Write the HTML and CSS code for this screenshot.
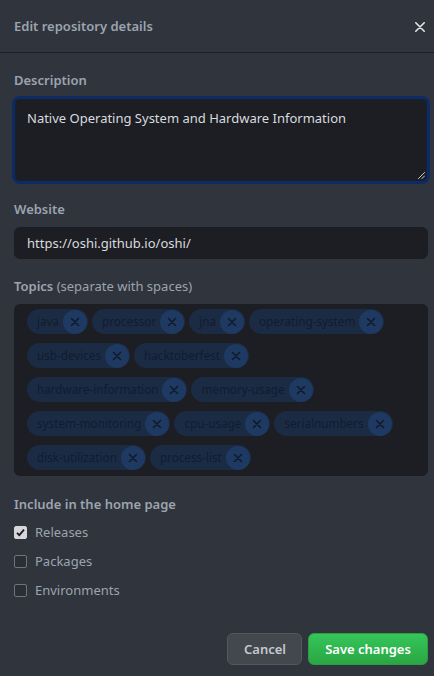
FILE: index.html
```html
<!DOCTYPE html>
<html lang="en">
<head>
<meta charset="utf-8">
<title>Edit repository details</title>
<link rel="stylesheet" href="styles.css">
</head>
<body>
<div class="dialog">
  <header class="dialog-header">
    <h1 class="dialog-title">Edit repository details</h1>
    <button class="close-btn" aria-label="Close">
      <svg width="10" height="10" viewBox="0 0 10 10"><path d="M0.8 0.8L9.2 9.2M9.2 0.8L0.8 9.2" stroke="#e3e5e8" stroke-width="1.6" stroke-linecap="round"/></svg>
    </button>
  </header>
  <form class="dialog-body">
    <div class="field">
      <label class="field-label">Description</label>
      <div class="textarea focused">
        <span class="value">Native Operating System and Hardware Information</span>
        <svg class="grip" width="8" height="8" viewBox="0 0 8 8"><path d="M7.5 1.5L1.5 7.5M7.5 5L5 7.5" stroke="#c9ccd1" stroke-width="1" stroke-linecap="square"/></svg>
      </div>
    </div>
    <div class="field">
      <label class="field-label">Website</label>
      <div class="input"><span class="value">https://oshi.github.io/oshi/</span></div>
    </div>
    <div class="field">
      <label class="field-label">Topics <span class="hint">(separate with spaces)</span></label>
      <div class="topics">
        <div class="tag-row">
          <span class="tag">java<span class="tag-x"><svg viewBox="0 0 10 10"><path d="M1.5 1.5L8.5 8.5M8.5 1.5L1.5 8.5"/></svg></span></span>
          <span class="tag">processor<span class="tag-x"><svg viewBox="0 0 10 10"><path d="M1.5 1.5L8.5 8.5M8.5 1.5L1.5 8.5"/></svg></span></span>
          <span class="tag">jna<span class="tag-x"><svg viewBox="0 0 10 10"><path d="M1.5 1.5L8.5 8.5M8.5 1.5L1.5 8.5"/></svg></span></span>
          <span class="tag">operating-system<span class="tag-x"><svg viewBox="0 0 10 10"><path d="M1.5 1.5L8.5 8.5M8.5 1.5L1.5 8.5"/></svg></span></span>
        </div>
        <div class="tag-row">
          <span class="tag">usb-devices<span class="tag-x"><svg viewBox="0 0 10 10"><path d="M1.5 1.5L8.5 8.5M8.5 1.5L1.5 8.5"/></svg></span></span>
          <span class="tag">hacktoberfest<span class="tag-x"><svg viewBox="0 0 10 10"><path d="M1.5 1.5L8.5 8.5M8.5 1.5L1.5 8.5"/></svg></span></span>
        </div>
        <div class="tag-row">
          <span class="tag">hardware-information<span class="tag-x"><svg viewBox="0 0 10 10"><path d="M1.5 1.5L8.5 8.5M8.5 1.5L1.5 8.5"/></svg></span></span>
          <span class="tag">memory-usage<span class="tag-x"><svg viewBox="0 0 10 10"><path d="M1.5 1.5L8.5 8.5M8.5 1.5L1.5 8.5"/></svg></span></span>
        </div>
        <div class="tag-row">
          <span class="tag">system-monitoring<span class="tag-x"><svg viewBox="0 0 10 10"><path d="M1.5 1.5L8.5 8.5M8.5 1.5L1.5 8.5"/></svg></span></span>
          <span class="tag">cpu-usage<span class="tag-x"><svg viewBox="0 0 10 10"><path d="M1.5 1.5L8.5 8.5M8.5 1.5L1.5 8.5"/></svg></span></span>
          <span class="tag">serialnumbers<span class="tag-x"><svg viewBox="0 0 10 10"><path d="M1.5 1.5L8.5 8.5M8.5 1.5L1.5 8.5"/></svg></span></span>
        </div>
        <div class="tag-row">
          <span class="tag">disk-utilization<span class="tag-x"><svg viewBox="0 0 10 10"><path d="M1.5 1.5L8.5 8.5M8.5 1.5L1.5 8.5"/></svg></span></span>
          <span class="tag">process-list<span class="tag-x"><svg viewBox="0 0 10 10"><path d="M1.5 1.5L8.5 8.5M8.5 1.5L1.5 8.5"/></svg></span></span>
        </div>
      </div>
    </div>
    <div class="field home">
      <div class="field-label">Include in the home page</div>
      <div class="check-list">
        <label class="check-row"><span class="box checked"><svg width="13" height="13" viewBox="0 0 13 13"><path d="M3 6.8L5.3 9.2L10 3.6" fill="none" stroke="#1b1d21" stroke-width="1.8"/></svg></span>Releases</label>
        <label class="check-row"><span class="box"></span>Packages</label>
        <label class="check-row"><span class="box"></span>Environments</label>
      </div>
    </div>
    <div class="actions">
      <button type="button" class="btn btn-cancel">Cancel</button>
      <button type="button" class="btn btn-save">Save changes</button>
    </div>
  </form>
</div>
</body>
</html>
```

FILE: styles.css
```css
* { box-sizing: border-box; }
html, body { margin: 0; padding: 0; }
body {
  background: #30343d;
  font-family: "Noto Sans", "Open Sans", sans-serif;
  font-size: 13px;
  color: #d5d8dc;
  width: 434px;
  height: 676px;
  overflow: hidden;
}
.dialog { display: flex; flex-direction: column; }
.dialog-header {
  height: 53px;
  border-bottom: 1px solid #1e2025;
  display: flex;
  align-items: center;
  justify-content: space-between;
  padding: 0 9px 0 14px;
}
.dialog-title {
  margin: 0;
  font-size: 13px;
  font-weight: 600;
  color: #9ca4af;
  line-height: 20px;
}
.close-btn {
  background: none;
  border: 0;
  padding: 0;
  width: 10px;
  height: 10px;
  display: flex;
  position: relative;
  top: 1px;
}
.dialog-body {
  padding: 17px 6px 0 14px;
  display: flex;
  flex-direction: column;
}
.field { margin-bottom: 17px; }
.field-label {
  display: block;
  font-size: 13px;
  font-weight: 600;
  line-height: 20px;
  color: #9ca4af;
  margin-bottom: 8px;
}
.hint { font-weight: 400; }
.textarea {
  height: 84px;
  background: #1d1e23;
  border: 1px solid #0d2d69;
  border-radius: 6px;
  box-shadow: 0 0 0 2px #0c2b66;
  padding: 9px 12px;
  line-height: 20px;
  position: relative;
}
.grip { position: absolute; right: 2px; bottom: 2px; }
.value { color: #d8dbdf; font-size: 13px; }
.input {
  height: 32px;
  background: #1d1e23;
  border: 1px solid #1d1e23;
  border-radius: 6px;
  padding: 5px 12px;
  line-height: 20px;
}
.topics {
  background: #1d1e23;
  border-radius: 6px;
  padding: 5px 13px 6px 13px;
  display: flex;
  flex-direction: column;
  gap: 9px;
}
.tag-row { display: flex; gap: 4px; }
.tag {
  display: inline-flex;
  align-items: center;
  height: 25px;
  padding: 0 1px 0 10px;
  border-radius: 13px;
  background: #1b2b44;
  color: #111c30;
  font-size: 11.7px;
  line-height: 25px;
}
.tag-x {
  width: 24px;
  height: 24px;
  border-radius: 50%;
  background: #1f3a62;
  margin-left: 4px;
  display: flex;
  align-items: center;
  justify-content: center;
}
.tag-x svg { width: 10px; height: 10px; }
.tag-x path { stroke: #111a29; stroke-width: 1.6; stroke-linecap: round; fill: none; }
.home { margin-top: 1px; }
.check-list { display: flex; flex-direction: column; gap: 9px; }
.check-row {
  display: flex;
  align-items: center;
  gap: 8px;
  font-size: 13px;
  line-height: 20px;
  color: #9ca4af;
}
.box {
  width: 13px;
  height: 13px;
  border: 1px solid #6f737a;
  border-radius: 2px;
  background: #2b2e35;
  display: flex;
}
.box.checked { background: #d6d7d9; border-color: #d6d7d9; }
.box svg { margin: -1px; }
.actions {
  display: flex;
  justify-content: flex-end;
  gap: 6px;
  margin-top: 16px;
}
.btn {
  height: 32px;
  border-radius: 6px;
  font-family: inherit;
  font-size: 13px;
  font-weight: 600;
  padding: 0 16px;
  cursor: pointer;
}
.btn-cancel {
  width: 75px;
  background: #43474e;
  border: 1px solid #53575e;
  color: #c5c9ce;
}
.btn-save {
  width: 120px;
  background: linear-gradient(#35c659, #2aa644);
  border: 1px solid #2a9f41;
  color: #ffffff;
}
```
